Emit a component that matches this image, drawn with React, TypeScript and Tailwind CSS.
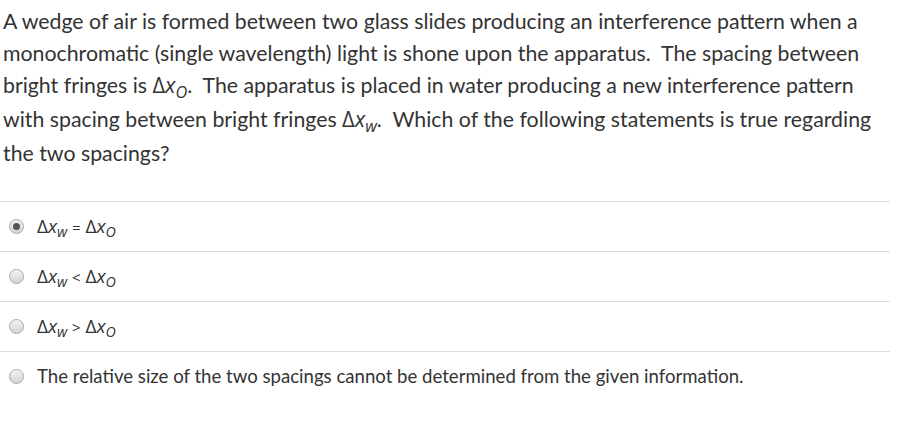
import React from "react"

function Dx({ sub }: { sub: string }) {
  return (
    <span className="font-['Open_Sans',sans-serif] text-[1.02em]">
      Δ<i>x</i>
      <span className="text-[0.75em] italic relative top-[0.3em]">{sub}</span>
    </span>
  )
}

function Radio({ checked }: { checked?: boolean }) {
  return (
    <span className="w-[15px] h-[15px] rounded-full border border-[#a9a9a9] bg-gradient-to-b from-[#f3f3f3] to-[#d4d4d4] flex items-center justify-center shrink-0">
      {checked && <span className="w-[7px] h-[7px] rounded-full bg-[#555]" />}
    </span>
  )
}

export default function App() {
  const op = "font-['Open_Sans',sans-serif] text-[15px]"
  const options = [
    { checked: true, body: <><Dx sub="w" /> <span className={op}>=</span> <Dx sub="O" /></> },
    { body: <><Dx sub="w" /> <span className={op}>&lt;</span> <Dx sub="O" /></> },
    { body: <><Dx sub="w" /> <span className={op}>&gt;</span> <Dx sub="O" /></> },
    { body: <span>The relative size of the two spacings cannot be determined from the given information.</span> },
  ]

  return (
    <div className="w-[900px] h-[421px] bg-white text-[#333] font-['Lato',sans-serif]">
      <p className="pl-[3px] pt-[5px] w-[880px] text-[21.3px] leading-[32px]">
        A wedge of air is formed between two glass slides producing an interference pattern when a monochromatic (single
        wavelength) light is shone upon the apparatus.&nbsp; The spacing between bright fringes is <Dx sub="O" />.&nbsp; The
        apparatus is placed in water producing a new interference pattern with spacing between bright fringes{" "}
        <Dx sub="w" />.&nbsp; Which of the following statements is true regarding the two spacings?
      </p>
      <div className="mt-[32px] w-[890px]">
        {options.map((o, i) => (
          <div key={i} className="h-[50px] border-t border-[#dcdcdc] flex items-center pl-[9px] gap-[13px] text-[18.6px]">
            <Radio checked={o.checked} />
            <div>{o.body}</div>
          </div>
        ))}
      </div>
    </div>
  )
}
